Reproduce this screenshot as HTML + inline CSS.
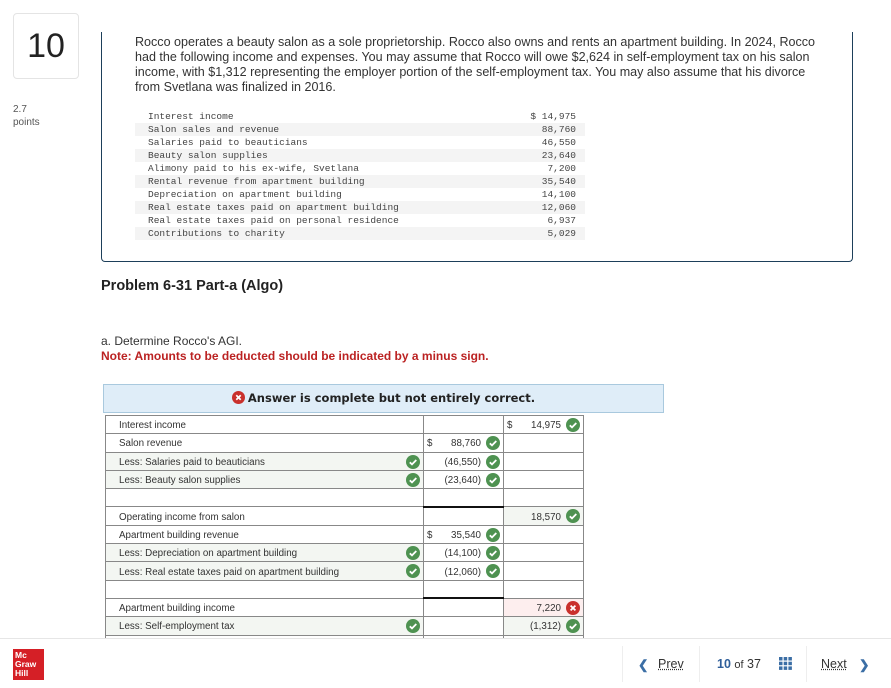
<!DOCTYPE html>
<html><head><meta charset="utf-8">
<style>
*{margin:0;padding:0;box-sizing:border-box}
body{width:891px;height:688px;overflow:hidden;background:#fff;font-family:"Liberation Sans",Arial,sans-serif;color:#333;position:relative}
.a{position:absolute}
.num{left:13px;top:13px;width:66px;height:66px;border:1px solid #e4e4e4;border-radius:4px;font-size:34px;color:#222;text-align:center;line-height:64px}
.pts{left:13px;top:103px;font-size:10px;color:#555;line-height:13px}
.qbox{left:101px;top:32px;width:752px;height:230px;border:1.5px solid #1d3f5a;border-top:none;border-radius:0 0 4px 4px}
.qtext{left:135px;top:35px;width:720px;font-size:12.55px;line-height:15px;color:#333;white-space:nowrap}
.mono{left:135px;top:110px;width:450px;font-family:"Liberation Mono","DejaVu Sans Mono",monospace;font-size:9.5px;color:#444}
.mono div{height:13px;line-height:13px;padding-left:13px;position:relative}
.mono div:nth-child(even){background:#f4f4f4}
.mono span{position:absolute;right:9px;top:0}
.h{left:101px;top:278px;font-size:14.5px;font-weight:bold;color:#222}
.det{left:101px;top:334px;font-size:12px;color:#333}
.note{left:101px;top:349px;font-size:12px;font-weight:bold;color:#b22}
.ban{left:103px;top:384px;width:561px;height:29px;background:#dfedf8;border:1px solid #a9c9de;font-size:11.5px;font-weight:bold;color:#222;text-align:center;line-height:27px;font-family:"DejaVu Sans",sans-serif}
table{position:absolute;left:105px;top:415px;border-collapse:collapse;font-size:9.8px;color:#333}
td{border:1px solid #888;height:18.3px;padding:2px 4px 0;position:relative}
td.l{width:318px;padding-left:13px}
td.c{width:80px;text-align:right;padding-right:22px}
tr.s td.l{background:#f3f6f2}
td.g{background:#f3f6f2}
td.r{background:#fdeeee}
.d{position:absolute;left:3px;top:4px}
.ic{position:absolute;top:2px;width:14px;height:14px}
td .ic{right:3px}
.thick{border-top:2px solid #111}
.foot{left:0;top:638px;width:891px;height:50px;border-top:1px solid #e6e6e6}
.logo{left:13px;top:649px;width:31px;height:31px;background:#d51f26;color:#fff;font-weight:bold;font-size:8.5px;line-height:9px;padding:2px 0 0 2px}
.nav{top:657px;font-size:12.5px;color:#333}
</style></head><body>
<svg width="0" height="0" style="position:absolute"><defs>
<symbol id="ok" viewBox="0 0 14 14"><circle cx="7" cy="7" r="7" fill="#4e9251"/><path d="M3.8 7.3l2.2 2.1 4.3-4.4" stroke="#fff" stroke-width="1.8" fill="none"/></symbol>
<symbol id="no" viewBox="0 0 14 14"><circle cx="7" cy="7" r="7" fill="#c9302c"/><path d="M4.6 4.6l4.8 4.8M9.4 4.6l-4.8 4.8" stroke="#fff" stroke-width="1.8"/></symbol>
</defs></svg>
<div class="a num">10</div>
<div class="a pts">2.7<br>points</div>
<div class="a qbox"></div>
<div class="a qtext">Rocco operates a beauty salon as a sole proprietorship. Rocco also owns and rents an apartment building. In 2024, Rocco<br>had the following income and expenses. You may assume that Rocco will owe $2,624 in self-employment tax on his salon<br>income, with $1,312 representing the employer portion of the self-employment tax. You may also assume that his divorce<br>from Svetlana was finalized in 2016.</div>
<div class="a mono">
<div>Interest income<span>$ 14,975</span></div>
<div>Salon sales and revenue<span>88,760</span></div>
<div>Salaries paid to beauticians<span>46,550</span></div>
<div>Beauty salon supplies<span>23,640</span></div>
<div>Alimony paid to his ex-wife, Svetlana<span>7,200</span></div>
<div>Rental revenue from apartment building<span>35,540</span></div>
<div>Depreciation on apartment building<span>14,100</span></div>
<div>Real estate taxes paid on apartment building<span>12,060</span></div>
<div>Real estate taxes paid on personal residence<span>6,937</span></div>
<div>Contributions to charity<span>5,029</span></div>
</div>
<div class="a h">Problem 6-31 Part-a (Algo)</div>
<div class="a det">a. Determine Rocco's AGI.</div>
<div class="a note">Note: Amounts to be deducted should be indicated by a minus sign.</div>
<div class="a ban"><svg width="13" height="13" style="vertical-align:-2px;margin-right:3px"><use href="#no"/></svg>Answer is complete but not entirely correct.</div>
<table>
<tr><td class="l">Interest income</td><td class="c"></td><td class="c"><span class="d">$</span>14,975<svg class="ic"><use href="#ok"/></svg></td></tr>
<tr><td class="l">Salon revenue</td><td class="c"><span class="d">$</span>88,760<svg class="ic"><use href="#ok"/></svg></td><td class="c"></td></tr>
<tr class="s"><td class="l">Less: Salaries paid to beauticians<svg class="ic"><use href="#ok"/></svg></td><td class="c">(46,550)<svg class="ic"><use href="#ok"/></svg></td><td class="c"></td></tr>
<tr class="s"><td class="l">Less: Beauty salon supplies<svg class="ic"><use href="#ok"/></svg></td><td class="c">(23,640)<svg class="ic"><use href="#ok"/></svg></td><td class="c"></td></tr>
<tr><td class="l"></td><td class="c"></td><td class="c"></td></tr>
<tr><td class="l">Operating income from salon</td><td class="c thick"></td><td class="c g">18,570<svg class="ic"><use href="#ok"/></svg></td></tr>
<tr><td class="l">Apartment building revenue</td><td class="c"><span class="d">$</span>35,540<svg class="ic"><use href="#ok"/></svg></td><td class="c"></td></tr>
<tr class="s"><td class="l">Less: Depreciation on apartment building<svg class="ic"><use href="#ok"/></svg></td><td class="c">(14,100)<svg class="ic"><use href="#ok"/></svg></td><td class="c"></td></tr>
<tr class="s"><td class="l">Less: Real estate taxes paid on apartment building<svg class="ic"><use href="#ok"/></svg></td><td class="c">(12,060)<svg class="ic"><use href="#ok"/></svg></td><td class="c"></td></tr>
<tr><td class="l"></td><td class="c"></td><td class="c"></td></tr>
<tr><td class="l">Apartment building income</td><td class="c thick"></td><td class="c r">7,220<svg class="ic"><use href="#no"/></svg></td></tr>
<tr class="s"><td class="l">Less: Self-employment tax<svg class="ic"><use href="#ok"/></svg></td><td class="c"></td><td class="c g">(1,312)<svg class="ic"><use href="#ok"/></svg></td></tr>
<tr><td class="l"></td><td class="c"></td><td class="c"></td></tr>
</table>
<div class="a foot" style="background:#fff"></div>
<div class="a logo">Mc<br>Graw<br>Hill</div>
<div class="a" style="left:622px;top:646px;width:1px;height:36px;background:#eee"></div>
<div class="a" style="left:699px;top:646px;width:1px;height:36px;background:#eee"></div>
<div class="a" style="left:806px;top:646px;width:1px;height:36px;background:#eee"></div>
<div class="a nav" style="left:638px;color:#3b6ea5;font-weight:bold">&#10094;</div>
<div class="a nav" style="left:658px;text-decoration:underline dotted">Prev</div>
<div class="a nav" style="left:717px"><b style="color:#2f5f9a">10</b> <span style="font-size:11px">of</span> 37</div>
<svg class="a" style="left:779px;top:657px" width="13" height="13"><g fill="#3b6ea5"><rect x="0" y="0" width="3.5" height="3.5"/><rect x="4.7" y="0" width="3.5" height="3.5"/><rect x="9.4" y="0" width="3.5" height="3.5"/><rect x="0" y="4.7" width="3.5" height="3.5"/><rect x="4.7" y="4.7" width="3.5" height="3.5"/><rect x="9.4" y="4.7" width="3.5" height="3.5"/><rect x="0" y="9.4" width="3.5" height="3.5"/><rect x="4.7" y="9.4" width="3.5" height="3.5"/><rect x="9.4" y="9.4" width="3.5" height="3.5"/></g></svg>
<div class="a nav" style="left:821px;text-decoration:underline dotted">Next</div>
<div class="a nav" style="left:859px;color:#3b6ea5;font-weight:bold">&#10095;</div>
</body></html>
